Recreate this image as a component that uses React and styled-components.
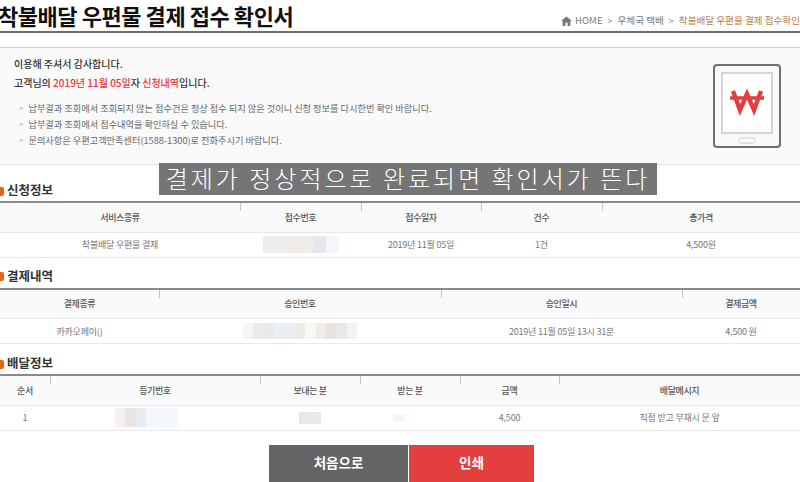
import React from 'react';
import styled, { createGlobalStyle } from 'styled-components';

const GlobalStyle = createGlobalStyle`
  html, body {
    margin: 0;
    padding: 0;
    background: #fff;
    overflow: hidden;
  }
  * {
    box-sizing: border-box;
  }
`;

const Page = styled.div`
  position: relative;
  width: 800px;
  height: 482px;
  overflow: hidden;
  font-family: "Noto Sans CJK KR", "Noto Sans", sans-serif;
  color: #666;
`;

const Header = styled.header`
  display: flex;
  align-items: flex-end;
  justify-content: space-between;
  height: 33px;
  border-bottom: 2px solid #6e6e6e;
  margin-bottom: 14px;
  white-space: nowrap;
`;

const Title = styled.h1`
  margin: 0 0 0 -2px;
  font-size: 22px;
  line-height: 31px;
  font-weight: 700;
  letter-spacing: -0.45px;
  color: #111;
`;

const Crumbs = styled.nav`
  display: flex;
  align-items: center;
  flex: none;
  width: 239px;
  height: 20px;
  margin-bottom: 1px;
  font-size: 9.6px;
  color: #777;
`;

const HomeIcon = styled.svg`
  width: 11px;
  height: 10px;
  margin-right: 3px;
  margin-top: 1px;
  flex: none;
`;

const CrumbSep = styled.span`
  margin: 0 5px;
  font-size: 9px;
  color: #888;
`;

const CrumbNow = styled.span`
  color: #b9803f;
`;

const Notice = styled.section`
  display: flex;
  justify-content: space-between;
  height: 118px;
  padding: 6px 19px 0 14px;
  background: #fafafa;
  border-top: 1px solid #ccc;
  border-bottom: 1px solid #e6e6e6;
`;

const Greeting = styled.p`
  margin: 0;
  font-size: 10px;
  line-height: 19px;
  font-weight: 500;
  color: #333;
`;

const Red = styled.span`
  color: #f0302c;
`;

const Bullets = styled.ul`
  margin: 8px 0 0;
  padding: 0 0 0 5px;
  list-style: none;
`;

const Bullet = styled.li`
  display: flex;
  gap: 5px;
  font-size: 9.2px;
  line-height: 16px;
  color: #666;

  &::before {
    content: '>';
    font-size: 8px;
    color: #d99a5b;
  }
`;

const Tablet = styled.svg`
  width: 68px;
  height: 84px;
  margin-top: 10px;
  flex: none;
`;

const Section = styled.section`
  margin-top: ${(p) => p.$top}px;
`;

const SectionHead = styled.h2`
  display: flex;
  align-items: center;
  gap: 3px;
  height: 16px;
  margin: 0 0 ${(p) => p.$gap || 3}px;
  font-size: 12.5px;
  line-height: 16px;
  font-weight: 700;
  color: #333;

  &::before {
    content: '';
    width: 4px;
    height: 9px;
    margin-top: 2px;
    border-radius: 0 2px 2px 0;
    background: #e8650f;
  }
`;

const Table = styled.table`
  width: 800px;
  border-collapse: collapse;
  table-layout: fixed;
  border-top: 2px solid #8a8a8a;
`;

const Th = styled.th`
  position: relative;
  height: 30px;
  padding: 0;
  background: #fafafa;
  border-bottom: 1px solid #e8e8e8;
  font-size: 9px;
  font-weight: 500;
  letter-spacing: -0.4px;
  color: #555;

  & + &::before {
    content: '';
    position: absolute;
    left: 0;
    top: 0;
    width: 1px;
    height: 8px;
    background: #c4c4c4;
  }
`;

const Td = styled.td`
  height: 25px;
  padding: 0;
  border-bottom: 1px solid #e8e8e8;
  text-align: center;
  font-size: 9px;
  letter-spacing: -0.2px;
  color: #777;
`;

const Blur = styled.div`
  display: flex;
  width: ${(p) => p.$w}px;
  height: ${(p) => p.$h}px;
  margin: 0 auto;
  transform: translateX(${(p) => p.$shift || 0}px);
`;

const Patch = styled.span`
  flex: 1;
  background: ${(p) => p.$c};
`;

const Caption = styled.div`
  position: absolute;
  left: 159px;
  top: 163px;
  width: 498px;
  height: 32px;
  background: #757575;
  color: #fff;
  font-size: 24px;
  font-weight: 300;
  line-height: 30px;
  letter-spacing: 3px;
  text-align: center;
  white-space: nowrap;
`;

const Actions = styled.div`
  display: flex;
  justify-content: center;
  gap: 1px;
  margin: 14px 0 0 3px;
`;

const ActionButton = styled.button`
  width: ${(p) => p.$w}px;
  height: 37px;
  border: 0;
  padding: 0 0 3px;
  background: ${(p) => p.$bg};
  color: #fff;
  font-family: inherit;
  font-size: 13.5px;
  font-weight: 700;
`;

const Smudge = ({ w, h, shift, colors }) => (
  <Blur $w={w} $h={h} $shift={shift}>
    {colors.map((c, i) => <Patch key={i} $c={c} />)}
  </Blur>
);

const DataTable = ({ cols, heads, cells }) => (
  <Table>
    <colgroup>
      {cols.map((w, i) => <col key={i} style={{ width: w }} />)}
    </colgroup>
    <thead>
      <tr>{heads.map((h) => <Th key={h}>{h}</Th>)}</tr>
    </thead>
    <tbody>
      <tr>{cells.map((c, i) => <Td key={i}>{c}</Td>)}</tr>
    </tbody>
  </Table>
);

export default function App() {
  return (
    <Page>
      <GlobalStyle />
      <Header>
        <Title>착불배달 우편물 결제 접수 확인서</Title>
        <Crumbs>
          <HomeIcon viewBox="0 0 11 10">
            <path d="M5.5 0.5 L11 5 H9.4 V10 H6.6 V6.8 H4.4 V10 H1.6 V5 H0 Z" fill="#777" />
          </HomeIcon>
          <span>HOME</span>
          <CrumbSep>&gt;</CrumbSep>
          <span>우체국 택배</span>
          <CrumbSep>&gt;</CrumbSep>
          <CrumbNow>착불배달 우편물 결제 접수확인서</CrumbNow>
        </Crumbs>
      </Header>

      <Notice>
        <div>
          <Greeting>이용해 주셔서 감사합니다.</Greeting>
          <Greeting>고객님의 <Red>2019년 11월 05일</Red>자 <Red>신청내역</Red>입니다.</Greeting>
          <Bullets>
            <Bullet>납부결과 조회에서 조회되지 않는 접수건은 정상 접수 되지 않은 것이니 신청 정보를 다시한번 확인 바랍니다.</Bullet>
            <Bullet>납부결과 조회에서 접수내역을 확인하실 수 있습니다.</Bullet>
            <Bullet>문의사항은 우편고객만족센터(1588-1300)로 전화주시기 바랍니다.</Bullet>
          </Bullets>
        </div>
        <Tablet viewBox="0 0 68 84">
          <rect x="1" y="1" width="66" height="82" rx="3" fill="#fafafa" stroke="#6f6f6f" strokeWidth="2" />
          <rect x="9" y="9" width="50" height="60" fill="#fff" stroke="#d4d4d4" strokeWidth="2" />
          <rect x="26" y="74" width="16" height="5" rx="1.5" fill="#fff" stroke="#c8c8c8" />
          <path d="M20 27 L27 46 L34 30 L41 46 L48 27" fill="none" stroke="#e53c3c" strokeWidth="4.4" />
          <path d="M17 34 H51" stroke="#e53c3c" strokeWidth="3.4" />
        </Tablet>
      </Notice>

      <Section $top={17}>
        <SectionHead>신청정보</SectionHead>
        <DataTable
          cols={[240, 121, 120, 121, 198]}
          heads={['서비스종류', '접수번호', '접수일자', '건수', '총가격']}
          cells={[
            '착불배달 우편물 결제',
            <Smudge w={76} h={17} colors={['#eeeef0', '#eeeef0', '#f1ece8', '#efedea', '#e6e6ec', '#f3f6fb']} />,
            '2019년 11월 05일',
            '1건',
            '4,500원',
          ]}
        />
      </Section>

      <Section $top={10}>
        <SectionHead $gap={4}>결제내역</SectionHead>
        <DataTable
          cols={[159, 282, 241, 118]}
          heads={['결제종류', '승인번호', '승인일시', '결제금액']}
          cells={[
            '카카오페이()',
            <Smudge w={114} h={16} colors={['#f3f7fb', '#eeeaea', '#ebe8ea', '#e9eff7', '#eaeef3', '#eeeae6', '#fbf8f3', '#efedea', '#e8e3e0', '#eae7e6', '#f3f3f3']} />,
            '2019년 11월 05일 13시 31분',
            '4,500 원',
          ]}
        />
      </Section>

      <Section $top={11}>
        <SectionHead>배달정보</SectionHead>
        <DataTable
          cols={[50, 210, 100, 100, 99, 241]}
          heads={['순서', '등기번호', '보내는 분', '받는 분', '금액', '배달메시지']}
          cells={[
            '1',
            <Smudge w={63} h={19} shift={-9} colors={['#f6f0ee', '#e8e5e4', '#e6ecf4', '#f3f7fb', '#f3f7fb', '#f4f8fc']} />,
            <Smudge w={22} h={12} colors={['#e6e9ea', '#ebe8e8']} />,
            <Smudge w={22} h={8} shift={-6} colors={['#f1f6fb', '#fbfcfe']} />,
            '4,500',
            '직접 받고 부재시 문 앞',
          ]}
        />
      </Section>

      <Actions>
        <ActionButton $w={139} $bg="#646464">처음으로</ActionButton>
        <ActionButton $w={125} $bg="#e33f3f">인쇄</ActionButton>
      </Actions>

      <Caption>결제가 정상적으로 완료되면 확인서가 뜬다</Caption>
    </Page>
  );
}
